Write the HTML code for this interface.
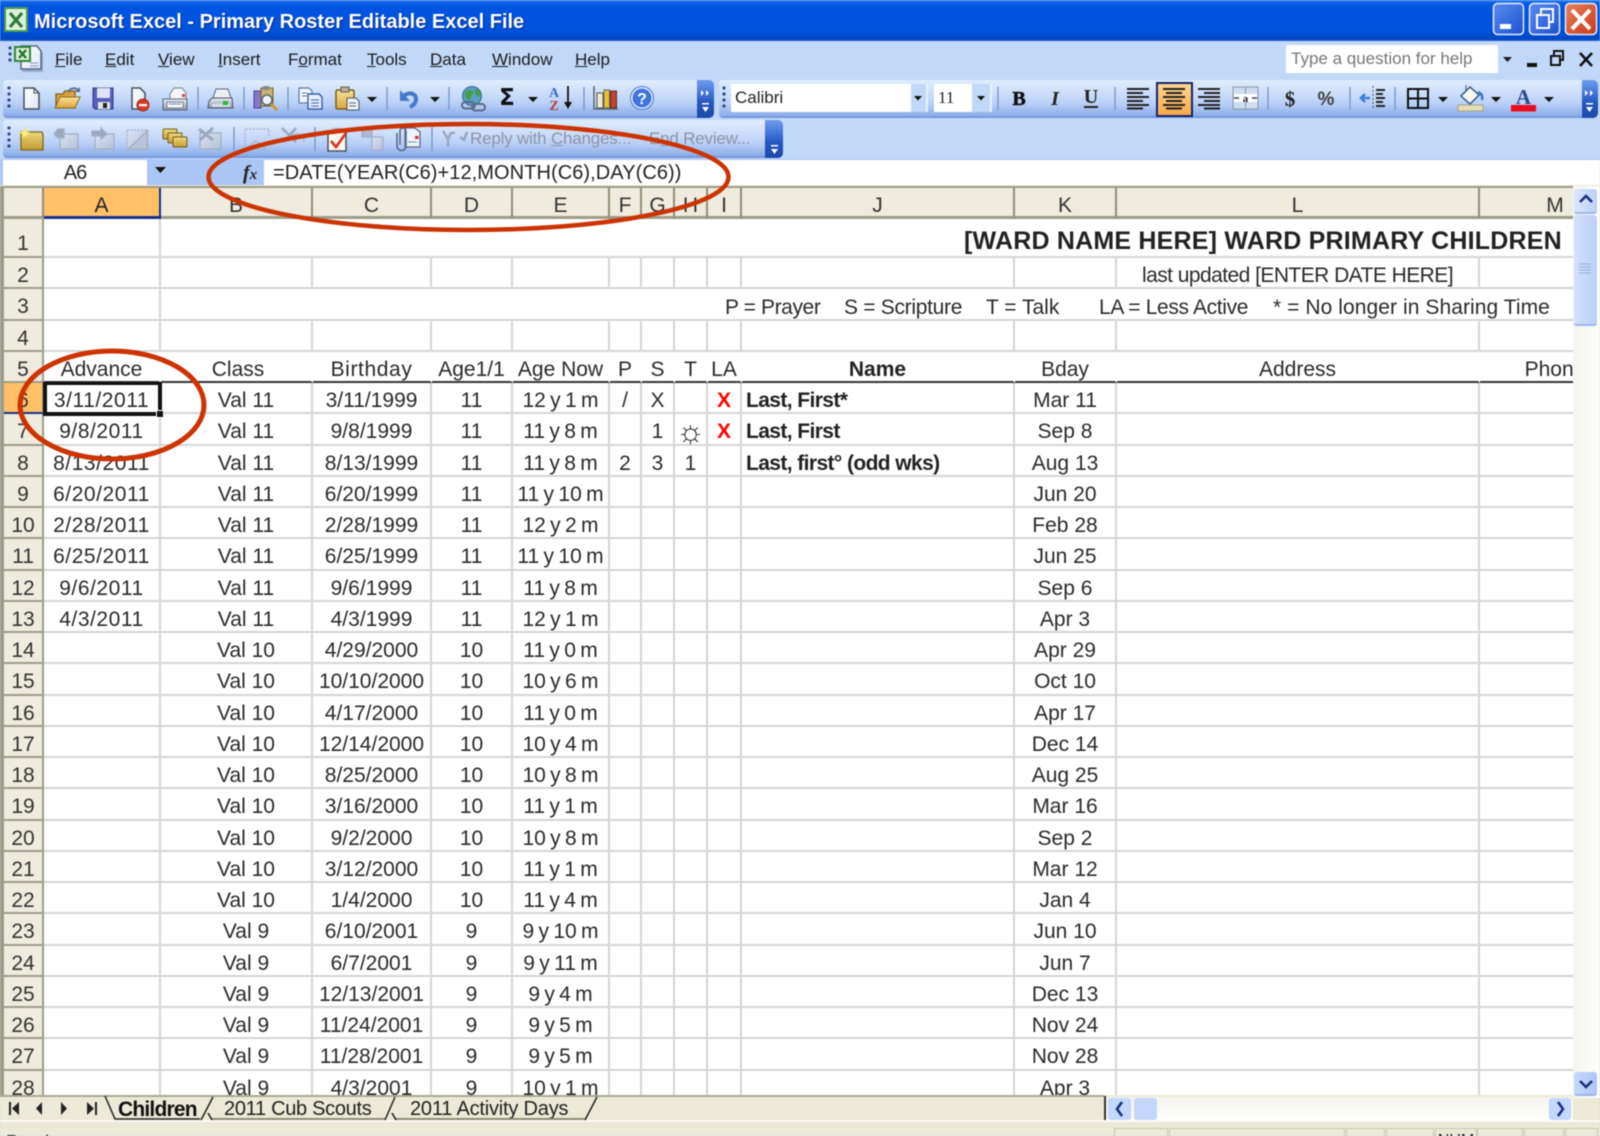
<!DOCTYPE html>
<html><head><meta charset="utf-8"><title>Microsoft Excel - Primary Roster</title>
<style>
html,body{margin:0;padding:0;background:#c1d8f9}
#p{position:relative;width:1600px;height:1136px;overflow:hidden;font-family:"Liberation Sans","DejaVu Sans",sans-serif;color:#222;filter:blur(.55px);background:#c1d8f9}
.a{position:absolute;white-space:nowrap}
#tb{left:0;top:0;width:1600px;height:41px;background:linear-gradient(#3a86f2 0,#0a5fe6 3px,#0054e0 8px,#0053dc 30px,#0046c4 39px,#2d62c8 41px)}
.tbar{height:38px;border-radius:4px 6px 6px 4px;background:linear-gradient(#e0ecfe 0,#cfe0fb 30%,#b9d0f7 62%,#8fb0ea 92%,#6a8fd8 100%)}
.chev{position:absolute;top:0;bottom:0;right:0;background:linear-gradient(#6f9df0,#2456c0 60%,#1d48a8);border-radius:0 5px 5px 0}
#g{position:absolute;left:4px;top:219px;width:1569px;height:876px;overflow:hidden;background:#fff}
.r{display:grid;grid-template-columns:40px 117px 152px 119px 81px 97px 32px 33px 33px 34px 273px 102px 363px 152px;grid-template-rows:100%;height:31.25px;font-size:21px;line-height:35px;text-align:center;color:#2a2a2a}
.r span{display:block;box-sizing:border-box;height:100%;border-right:2px solid #d4d4d4;border-bottom:2px solid #d4d4d4;overflow:visible;white-space:nowrap;min-width:0}
.r span:first-child{background:#efebde;border-right:2px solid #9d9c88;border-bottom:2px solid #9d9c88;color:#333}
.r span:nth-child(2){letter-spacing:.55px}
.r span:nth-child(3){padding-left:20px}
.r span:nth-child(6){word-spacing:-1.5px}
.r span:nth-child(11){text-align:left;padding-left:4px;font-weight:bold;color:#222;letter-spacing:-.6px}
.h{height:31.25px}
.h span{border-right-color:transparent;border-bottom:2px solid #333}
.h span:nth-child(2){letter-spacing:0}
.h span:nth-child(3){padding-left:4px}
.h span:nth-child(4){letter-spacing:.6px}
.h span:nth-child(6){word-spacing:0}
.h span:nth-child(11){text-align:center;padding:0;letter-spacing:0}
.r span.x{color:#f00;font-weight:bold}
.r span.s{font-size:32px}
#ch{position:absolute;left:4px;top:188px;width:1569px;height:31px;overflow:hidden;background:#efebde}
#ch div{position:absolute;top:0;height:28px;line-height:35px;font-size:21px;text-align:center;background:#efebde;border-right:2px solid #8f8e78;border-bottom:3px solid #9d9c88;color:#333}
</style></head><body><div id="p">

<div id="tb" class="a"></div>
<div class="a" style="left:34px;top:9px;font-size:20px;line-height:26px;font-weight:bold;color:#fff;text-shadow:1px 1px 1px #0a2a80">Microsoft Excel - Primary Roster Editable Excel File</div>

<!-- menu -->
<div class="a" style="left:0;top:47px;font-size:17px;line-height:26px;color:#1c1c1c">
<span class="a" style="left:55px"><u>F</u>ile</span><span class="a" style="left:105px"><u>E</u>dit</span><span class="a" style="left:158px"><u>V</u>iew</span><span class="a" style="left:218px"><u>I</u>nsert</span><span class="a" style="left:288px">F<u>o</u>rmat</span><span class="a" style="left:367px"><u>T</u>ools</span><span class="a" style="left:430px"><u>D</u>ata</span><span class="a" style="left:492px"><u>W</u>indow</span><span class="a" style="left:575px"><u>H</u>elp</span></div>
<div class="a" style="left:1286px;top:45px;width:231px;height:28px;background:#fff;font-size:17px;line-height:27px;color:#777;text-indent:5px;overflow:hidden">Type a question for help<div class="a" style="left:212px;top:0;width:19px;height:28px;background:#c3d8f8"></div></div>

<!-- toolbars -->
<div class="a tbar" style="left:3px;top:80px;width:711px"><div class="chev" style="width:17px"></div></div>
<div class="a tbar" style="left:719px;top:80px;width:879px"><div class="chev" style="width:16px"></div></div>
<div class="a tbar" style="left:3px;top:120px;width:780px"><div class="chev" style="width:18px"></div></div>

<div class="a" style="left:731px;top:84px;width:180px;height:28px;background:#fff;font-size:17px;line-height:27px;text-indent:4px">Calibri</div>
<div class="a" style="left:911px;top:84px;width:15px;height:28px;background:#c3d8f8;border-right:2px solid #e8f0fd"></div>
<div class="a" style="left:934px;top:84px;width:38px;height:28px;background:#fff;font:17px/27px 'Liberation Serif',serif;text-indent:4px">11</div>
<div class="a" style="left:972px;top:84px;width:18px;height:28px;background:#c3d8f8;border-right:2px solid #e8f0fd"></div>
<div class="a" style="left:1156px;top:82px;width:33px;height:31px;background:linear-gradient(#ffd58f,#fba94c);border:2px solid #10246e"></div>

<!-- toolbar 3 text -->
<div class="a" style="left:470px;top:126px;font-size:17px;line-height:26px;color:#8d94a6;letter-spacing:-.2px">Reply with <u>C</u>hanges...</div>
<div class="a" style="left:649px;top:126px;font-size:17px;line-height:26px;color:#8d94a6;letter-spacing:-.2px">E<u>n</u>d Review...</div>

<!-- formula bar -->
<div class="a" style="left:0;top:159px;width:1600px;height:27px;background:#aac6f4"></div>
<div class="a" style="left:3px;top:160px;width:144px;height:25px;background:#fff;text-align:center;font-size:20px;line-height:26px;letter-spacing:-1px;color:#222">A6</div>
<div class="a" style="left:264px;top:160px;width:1336px;height:25px;background:#fff;font-size:20px;line-height:26px;text-indent:9px;letter-spacing:.07px;color:#222">=DATE(YEAR(C6)+12,MONTH(C6),DAY(C6))</div>
<div class="a" style="left:243px;top:160px;font:italic bold 20px/26px 'Liberation Serif',serif;color:#222">f<span style="font-size:15px">x</span></div>

<!-- sheet area -->
<div class="a" style="left:0;top:185px;width:1600px;height:951px;background:#ece9d8"></div>
<div class="a" style="left:0;top:186px;width:1574px;height:2px;background:#9d9c88"></div>
<div class="a" style="left:0;top:186px;width:4px;height:930px;background:#9d9c88"></div>
<div id="ch">
<div style="left:0;width:38px"></div>
<div style="left:40px;width:115px;background:#ffc068;border-right:2px solid #1c2f8a;border-bottom:3px solid #1c2f8a;color:#222">A</div>
<div style="left:157px;width:150px">B</div>
<div style="left:309px;width:117px">C</div>
<div style="left:428px;width:79px">D</div>
<div style="left:509px;width:95px">E</div>
<div style="left:606px;width:30px">F</div>
<div style="left:638px;width:31px">G</div>
<div style="left:671px;width:31px">H</div>
<div style="left:704px;width:32px">I</div>
<div style="left:738px;width:271px">J</div>
<div style="left:1011px;width:100px">K</div>
<div style="left:1113px;width:361px">L</div>
<div style="left:1476px;width:150px;border-right:0">M</div>
</div>

<div id="g">
<div class="r" style="height:39px"><span>&nbsp;</span><span></span><span style="grid-column:3/15;border-right:0"></span></div>
<div class="r"><span>2</span><span></span><span></span><span></span><span></span><span></span><span></span><span></span><span></span><span></span><span></span><span></span><span style="letter-spacing:-.55px;font-weight:normal">last updated [ENTER DATE HERE]</span><span></span></div>
<div class="r"><span>3</span><span></span><span style="grid-column:3/15;border-right:0"></span></div>
<div class="r"><span>4</span><span></span><span></span><span></span><span></span><span></span><span></span><span></span><span></span><span></span><span></span><span></span><span></span><span></span></div>
<div class="r h"><span>5</span><span>Advance</span><span>Class</span><span>Birthday</span><span>Age1/1</span><span>Age Now</span><span>P</span><span>S</span><span>T</span><span>LA</span><span>Name</span><span>Bday</span><span>Address</span><span>Phone</span></div>
<div class="r"><span style="background:#ffc068;border-bottom-color:#1c2f8a">6</span><span>3/11/2011</span><span>Val 11</span><span>3/11/1999</span><span>11</span><span>12 y 1 m</span><span>/</span><span>X</span><span></span><span class="x">X</span><span>Last, First*</span><span>Mar 11</span><span></span><span></span></div>
<div class="r"><span>7</span><span>9/8/2011</span><span>Val 11</span><span>9/8/1999</span><span>11</span><span>11 y 8 m</span><span></span><span>1</span><span class="s">☼</span><span class="x">X</span><span>Last, First</span><span>Sep 8</span><span></span><span></span></div>
<div class="r"><span>8</span><span>8/13/2011</span><span>Val 11</span><span>8/13/1999</span><span>11</span><span>11 y 8 m</span><span>2</span><span>3</span><span>1</span><span></span><span>Last, first° (odd wks)</span><span>Aug 13</span><span></span><span></span></div>
<div class="r"><span>9</span><span>6/20/2011</span><span>Val 11</span><span>6/20/1999</span><span>11</span><span>11 y 10 m</span><span></span><span></span><span></span><span></span><span></span><span>Jun 20</span><span></span><span></span></div>
<div class="r"><span>10</span><span>2/28/2011</span><span>Val 11</span><span>2/28/1999</span><span>11</span><span>12 y 2 m</span><span></span><span></span><span></span><span></span><span></span><span>Feb 28</span><span></span><span></span></div>
<div class="r"><span>11</span><span>6/25/2011</span><span>Val 11</span><span>6/25/1999</span><span>11</span><span>11 y 10 m</span><span></span><span></span><span></span><span></span><span></span><span>Jun 25</span><span></span><span></span></div>
<div class="r"><span>12</span><span>9/6/2011</span><span>Val 11</span><span>9/6/1999</span><span>11</span><span>11 y 8 m</span><span></span><span></span><span></span><span></span><span></span><span>Sep 6</span><span></span><span></span></div>
<div class="r"><span>13</span><span>4/3/2011</span><span>Val 11</span><span>4/3/1999</span><span>11</span><span>12 y 1 m</span><span></span><span></span><span></span><span></span><span></span><span>Apr 3</span><span></span><span></span></div>
<div class="r"><span>14</span><span></span><span>Val 10</span><span>4/29/2000</span><span>10</span><span>11 y 0 m</span><span></span><span></span><span></span><span></span><span></span><span>Apr 29</span><span></span><span></span></div>
<div class="r"><span>15</span><span></span><span>Val 10</span><span>10/10/2000</span><span>10</span><span>10 y 6 m</span><span></span><span></span><span></span><span></span><span></span><span>Oct 10</span><span></span><span></span></div>
<div class="r"><span>16</span><span></span><span>Val 10</span><span>4/17/2000</span><span>10</span><span>11 y 0 m</span><span></span><span></span><span></span><span></span><span></span><span>Apr 17</span><span></span><span></span></div>
<div class="r"><span>17</span><span></span><span>Val 10</span><span>12/14/2000</span><span>10</span><span>10 y 4 m</span><span></span><span></span><span></span><span></span><span></span><span>Dec 14</span><span></span><span></span></div>
<div class="r"><span>18</span><span></span><span>Val 10</span><span>8/25/2000</span><span>10</span><span>10 y 8 m</span><span></span><span></span><span></span><span></span><span></span><span>Aug 25</span><span></span><span></span></div>
<div class="r"><span>19</span><span></span><span>Val 10</span><span>3/16/2000</span><span>10</span><span>11 y 1 m</span><span></span><span></span><span></span><span></span><span></span><span>Mar 16</span><span></span><span></span></div>
<div class="r"><span>20</span><span></span><span>Val 10</span><span>9/2/2000</span><span>10</span><span>10 y 8 m</span><span></span><span></span><span></span><span></span><span></span><span>Sep 2</span><span></span><span></span></div>
<div class="r"><span>21</span><span></span><span>Val 10</span><span>3/12/2000</span><span>10</span><span>11 y 1 m</span><span></span><span></span><span></span><span></span><span></span><span>Mar 12</span><span></span><span></span></div>
<div class="r"><span>22</span><span></span><span>Val 10</span><span>1/4/2000</span><span>10</span><span>11 y 4 m</span><span></span><span></span><span></span><span></span><span></span><span>Jan 4</span><span></span><span></span></div>
<div class="r"><span>23</span><span></span><span>Val 9</span><span>6/10/2001</span><span>9</span><span>9 y 10 m</span><span></span><span></span><span></span><span></span><span></span><span>Jun 10</span><span></span><span></span></div>
<div class="r"><span>24</span><span></span><span>Val 9</span><span>6/7/2001</span><span>9</span><span>9 y 11 m</span><span></span><span></span><span></span><span></span><span></span><span>Jun 7</span><span></span><span></span></div>
<div class="r"><span>25</span><span></span><span>Val 9</span><span>12/13/2001</span><span>9</span><span>9 y 4 m</span><span></span><span></span><span></span><span></span><span></span><span>Dec 13</span><span></span><span></span></div>
<div class="r"><span>26</span><span></span><span>Val 9</span><span>11/24/2001</span><span>9</span><span>9 y 5 m</span><span></span><span></span><span></span><span></span><span></span><span>Nov 24</span><span></span><span></span></div>
<div class="r"><span>27</span><span></span><span>Val 9</span><span>11/28/2001</span><span>9</span><span>9 y 5 m</span><span></span><span></span><span></span><span></span><span></span><span>Nov 28</span><span></span><span></span></div>
<div class="r"><span>28</span><span></span><span>Val 9</span><span>4/3/2001</span><span>9</span><span>10 y 1 m</span><span></span><span></span><span></span><span></span><span></span><span>Apr 3</span><span></span><span></span></div>

<div class="a" style="left:0;top:8px;width:38px;text-align:center;font-size:21px;line-height:33px;color:#333">1</div>
<div class="a" style="left:960px;top:3px;font-size:25px;line-height:38px;font-weight:bold;color:#222;letter-spacing:.2px">[WARD NAME HERE] WARD PRIMARY CHILDREN</div>
<div class="a" style="left:0;top:72px;font-size:21px;line-height:33px;color:#2a2a2a">
<span class="a" style="left:721px;letter-spacing:-.4px">P = Prayer</span><span class="a" style="left:840px;letter-spacing:-.3px">S = Scripture</span><span class="a" style="left:982px">T = Talk</span><span class="a" style="left:1095px;letter-spacing:-.35px">LA = Less Active</span><span class="a" style="left:1269px;letter-spacing:.07px">* = No longer in Sharing Time</span></div>
<div class="a" style="left:39px;top:163px;width:111px;height:27px;border:4px solid #111;border-top-width:3px"></div>
<div class="a" style="left:152px;top:191px;width:6px;height:6px;background:#111;border:1px solid #fff"></div>
</div>

<!-- vertical scrollbar -->
<div class="a" style="left:1573px;top:186px;width:27px;height:912px;background:linear-gradient(90deg,#f5f4ee,#fdfdfa)"></div>
<div class="a" style="left:1574px;top:189px;width:23px;height:23px;background:linear-gradient(90deg,#dbe7fd,#bcd0f8);border-radius:3px;border-bottom:2px solid #9bb6e8"></div>
<div class="a" style="left:1574px;top:215px;width:23px;height:109px;background:linear-gradient(90deg,#d3e1fc,#bccff8);border-radius:3px;border-bottom:2px solid #9bb6e8"></div>
<div class="a" style="left:1574px;top:1072px;width:23px;height:22px;background:linear-gradient(90deg,#c6d8fb,#aec6f6);border-radius:3px;border-bottom:2px solid #9bb6e8"></div>

<!-- tab strip -->
<div class="a" style="left:0;top:1095px;width:1104px;height:25px;background:#ece9d8;border-top:2px solid #aaa892"></div>
<div class="a" style="left:1104px;top:1097px;width:469px;height:23px;background:linear-gradient(#f5f4ee,#fdfdfa)"></div>
<div class="a" style="left:1104px;top:1096px;width:2px;height:24px;background:#333"></div>
<div class="a" style="left:1108px;top:1098px;width:23px;height:22px;background:#c3d6fb;border-radius:3px"></div>
<div class="a" style="left:1134px;top:1098px;width:23px;height:22px;background:#c3d6fb;border-radius:3px"></div>
<div class="a" style="left:1549px;top:1098px;width:22px;height:22px;background:#c3d6fb;border-radius:3px"></div>
<div class="a" style="left:118px;top:1096px;font-size:21px;line-height:27px;font-weight:bold;color:#111;letter-spacing:-.8px">Children</div>
<div class="a" style="left:224px;top:1096px;font-size:20px;line-height:27px;color:#222;letter-spacing:-.3px">2011 Cub Scouts</div>
<div class="a" style="left:410px;top:1096px;font-size:20px;line-height:27px;color:#222;letter-spacing:-.2px">2011 Activity Days</div>

<!-- status -->
<div class="a" style="left:0;top:1120px;width:1600px;height:2px;background:#fbfaf5"></div>
<div class="a" style="left:6px;top:1131px;font-size:18px;line-height:22px;color:#222">Ready</div>
<div class="a" style="left:1114px;top:1128px;width:52px;height:10px;border:1px solid #c8c5b2"></div>
<div class="a" style="left:1169px;top:1128px;width:174px;height:10px;border:1px solid #c8c5b2"></div>
<div class="a" style="left:1346px;top:1128px;width:37px;height:10px;border:1px solid #c8c5b2"></div>
<div class="a" style="left:1386px;top:1128px;width:46px;height:10px;border:1px solid #c8c5b2"></div>
<div class="a" style="left:1435px;top:1128px;width:40px;height:10px;border:1px solid #c8c5b2;font-size:16px;line-height:24px;text-align:center;overflow:hidden;color:#111">NUM</div>
<div class="a" style="left:1477px;top:1128px;width:44px;height:10px;border:1px solid #c8c5b2"></div>
<div class="a" style="left:1524px;top:1128px;width:38px;height:10px;border:1px solid #c8c5b2"></div>
<div class="a" style="left:1565px;top:1128px;width:31px;height:10px;border:1px solid #c8c5b2"></div>

<svg class="a" style="left:0;top:0" width="1600" height="1136" viewBox="0 0 1600 1136" xmlns="http://www.w3.org/2000/svg" font-family="Liberation Sans, sans-serif">
<defs>
<linearGradient id="bb" x1="0" y1="0" x2="1" y2="1"><stop offset="0" stop-color="#5b8cf0"/><stop offset="1" stop-color="#1c4fd0"/></linearGradient>
<linearGradient id="rr" x1="0" y1="0" x2="1" y2="1"><stop offset="0" stop-color="#e8835c"/><stop offset="1" stop-color="#c9371a"/></linearGradient>
<linearGradient id="fo" x1="0" y1="0" x2="0" y2="1"><stop offset="0" stop-color="#fbe49a"/><stop offset="1" stop-color="#d9a43a"/></linearGradient>
<linearGradient id="fd" x1="0" y1="0" x2="0" y2="1"><stop offset="0" stop-color="#f0d882"/><stop offset="1" stop-color="#c09a30"/></linearGradient>
<linearGradient id="dc" x1="0" y1="0" x2="1" y2="1"><stop offset="0" stop-color="#fff"/><stop offset="1" stop-color="#dfe7f5"/></linearGradient>
<linearGradient id="gy" x1="0" y1="0" x2="0" y2="1"><stop offset="0" stop-color="#e8edf5"/><stop offset="1" stop-color="#8c95a6"/></linearGradient>
<linearGradient id="dg" x1="0" y1="0" x2="1" y2="1"><stop offset="0" stop-color="#dbe3f1"/><stop offset="1" stop-color="#b3c0d8"/></linearGradient>
</defs>
<!-- title icon -->
<rect x="5" y="8" width="22" height="23" fill="#dff0da" stroke="#4a9a50" stroke-width="2"/><path d="M10 13l12 14M22 13L10 27" stroke="#2d7d3a" stroke-width="3.200"/>
<!-- window buttons -->
<g stroke="#e6eefc" stroke-width="1.500"><rect x="1493.500" y="3.500" width="30" height="31" rx="4" fill="url(#bb)"/><rect x="1529.500" y="3.500" width="30" height="31" rx="4" fill="url(#bb)"/><rect x="1565.500" y="3.500" width="31" height="31" rx="4" fill="url(#rr)"/></g>
<rect x="1500" y="24" width="11" height="5" fill="#fff"/>
<g fill="none" stroke="#fff" stroke-width="2"><rect x="1537" y="15" width="12" height="13"/><path d="M1541 14v-5h12v13h-4"/><path d="M1572 10l18 19M1590 10l-18 19" stroke-width="4"/></g>
<!-- menu icon -->
<g fill="#2c4a84"><circle cx="10" cy="48" r="1.600"/><circle cx="10" cy="54" r="1.600"/><circle cx="10" cy="60" r="1.600"/></g>
<path d="M21 46h16l5 5v19H21z" fill="#4a5e82" opacity=".35" transform="translate(1 2)"/><path d="M21 46h16l4 5v18H21z" fill="url(#dc)" stroke="#55688c" stroke-width="1.500"/><rect x="15" y="47" width="15" height="14" fill="#dceed6" stroke="#2f8a3b" stroke-width="2"/><path d="M19 50l7 8M26 50l-7 8" stroke="#1f7a32" stroke-width="2.400"/><path d="M30 63h8M30 66h8" stroke="#7f96c0"/>
<!-- help box arrow & doc controls -->
<path d="M1503 57h9l-4.500 5z" fill="#1a1a2a"/><rect x="1527" y="63" width="10" height="4" fill="#111"/>
<g fill="none" stroke="#111" stroke-width="2"><rect x="1551" y="56" width="9" height="9"/><path d="M1554 55v-4h9v9h-3"/><path d="M1580 53l12 13M1592 53l-12 13" stroke-width="2.500"/></g>

<!-- grips -->
<g fill="#2c4a84"><circle cx="9" cy="88" r="1.600"/><circle cx="9" cy="94" r="1.600"/><circle cx="9" cy="100" r="1.600"/><circle cx="9" cy="106" r="1.600"/><circle cx="724" cy="88" r="1.600"/><circle cx="724" cy="94" r="1.600"/><circle cx="724" cy="100" r="1.600"/><circle cx="724" cy="106" r="1.600"/><circle cx="9" cy="128" r="1.600"/><circle cx="9" cy="134" r="1.600"/><circle cx="9" cy="140" r="1.600"/><circle cx="9" cy="146" r="1.600"/></g>
<!-- separators -->
<g stroke="#7f9cce" stroke-width="1.500"><path d="M198 87v23M244 87v23M288 87v23M387 87v23M449 87v23M584 87v23M998 87v23M1115 87v23M1268 87v23M1350 87v23M1395 87v23M234 127v24M315 127v24M432 127v24"/></g>
<!-- chevrons -->
<g fill="#fff"><path d="M701 90l3 3-3 3zM706 90l3 3-3 3zM702 107h7l-3.500 5zM702 103h7v1.500h-7z"/><path d="M1585 90l3 3-3 3zM1590 90l3 3-3 3zM1586 107h7l-3.500 5zM1586 103h7v1.500h-7z"/><path d="M771 149h7l-3.500 5zM771 145h7v1.500h-7z"/></g>

<!-- new doc -->
<path d="M24 88h10l5 5v16H24z" fill="url(#dc)" stroke="#46505f" stroke-width="1.500"/><path d="M34 88v5h5" fill="none" stroke="#46505f"/>
<!-- open -->
<path d="M56 108V94h7l2-3h10v17z" fill="#d9a43a" stroke="#7e6020" stroke-width="1.200"/><path d="M55 108l5-11h20l-5 11z" fill="url(#fo)" stroke="#8a6a20"/><path d="M68 92c2-4 7-5 10-2" fill="none" stroke="#4c6f9c" stroke-width="1.800"/><path d="M80 87v5h-5z" fill="#4c6f9c"/>
<!-- save -->
<path d="M93 88h20v21H95l-2-2z" fill="#5a5fb8" stroke="#2e3a86"/><rect x="97" y="88" width="13" height="10" fill="#dfe4f6"/><rect x="98" y="102" width="12" height="7" fill="#e4e4e4"/><rect x="103" y="103" width="4" height="5" fill="#222"/>
<!-- permission -->
<path d="M132 88h8l5 5v16h-13z" fill="url(#dc)" stroke="#454f60" stroke-width="1.500"/><circle cx="143" cy="105" r="6" fill="#d83a2a" stroke="#a82818"/><rect x="139" y="104" width="8" height="2.200" fill="#fff"/>
<!-- mail -->
<path d="M170 94l4-6h8l4 5v8h-16z" fill="#f4f6fa" stroke="#747e90"/><rect x="182" y="94" width="3" height="3" fill="#d44"/><rect x="163" y="99" width="24" height="11" fill="url(#gy)" stroke="#5c6678"/><rect x="167" y="102" width="16" height="6" fill="#f2f5fa" stroke="#7a8498"/><path d="M169 104h12" stroke="#7a8ab0"/>
<!-- print -->
<path d="M216 89h12l3 9h-18z" fill="#edf0f6" stroke="#5c6678"/><path d="M212 98h20l1 10h-25l1-7z" fill="url(#gy)" stroke="#4c5464"/><rect x="212" y="104" width="18" height="3" fill="#d8dde6"/><rect x="223" y="101" width="5" height="4" fill="#22c032"/>
<!-- research -->
<rect x="254" y="91" width="7" height="17" fill="#8278c8" stroke="#4a4490"/><rect x="261" y="88" width="12" height="18" fill="#c8b470" stroke="#6e6030"/><rect x="263" y="86" width="6" height="4" fill="#888"/><circle cx="267" cy="100" r="5" fill="#eef2fa" stroke="#5a6478" stroke-width="1.500"/><path d="M271 104l6 6" stroke="#d09a1c" stroke-width="3"/>
<!-- copy -->
<path d="M299 88h10l3 3v12h-13z" fill="#f2f5fb" stroke="#5a78b0" stroke-width="1.200"/><path d="M308 94h11l3 3v12h-14z" fill="#e8effb" stroke="#3560a8" stroke-width="1.400"/><path d="M311 100h8M311 103h8M311 106h8" stroke="#3a66b8"/><path d="M302 93h5M302 96h5" stroke="#5a78b0"/>
<!-- paste -->
<rect x="336" y="90" width="18" height="19" rx="1.500" fill="url(#fo)" stroke="#76601e" stroke-width="1.500"/><rect x="341" y="87" width="8" height="5" fill="#b8b0a0" stroke="#665c40"/><path d="M347 98h9l3 3v9h-12z" fill="#eff2f7" stroke="#4a5568"/><path d="M349 103h7M349 106h7" stroke="#667"/>
<path d="M367 97h10l-5 5zM430 97h10l-5 5zM528 97h10l-5 5zM1438 97h10l-5 5zM1491 97h10l-5 5zM1544 97h10l-5 5zM914 96h8l-4 4.500zM977 96h8l-4 4.500zM155 167h11l-5.500 6z" fill="#111"/>
<!-- undo -->
<path d="M400 90v11h10z" fill="#4678cc"/><path d="M403 97c5-6 13-4 13 2 0 3-2 6-6 8" fill="none" stroke="#4678cc" stroke-width="4"/>
<!-- globe -->
<circle cx="472" cy="96" r="9.500" fill="#5a9ec8" stroke="#3a6a90"/><path d="M465 92c3-3 7-3 8 0s-2 4-3 7-3 1-5-3zM475 89c3 0 6 3 6 6l-3 2c-2-2-4-4-3-8z" fill="#44a048"/><rect x="462" y="102" width="13" height="6.500" rx="3.200" fill="none" stroke="#5c6c84" stroke-width="2"/><rect x="472" y="104" width="13" height="6.500" rx="3.200" fill="none" stroke="#5c6c84" stroke-width="2"/>
<text x="507" y="105" text-anchor="middle" font-size="23" font-weight="bold" font-family="DejaVu Sans, sans-serif" fill="#111">Σ</text>
<!-- sort -->
<text x="554" y="97" text-anchor="middle" font-size="14" font-weight="bold" font-family="Liberation Serif, serif" fill="#3a68c4">A</text><text x="554" y="110" text-anchor="middle" font-size="14" font-weight="bold" font-family="Liberation Serif, serif" fill="#b04040">Z</text>
<path d="M568 86v21" stroke="#111" stroke-width="1.800"/><path d="M564 102h8l-4 7z" fill="#111"/>
<!-- chart -->
<path d="M594 86v23h24" fill="none" stroke="#5c6678" stroke-width="1.500"/><rect x="597" y="93" width="6" height="15" fill="#f0e8d0" stroke="#555"/><rect x="604" y="90" width="5.500" height="18" fill="#e8c030" stroke="#665"/><rect x="610.500" y="91" width="6" height="17" fill="#c84030" stroke="#533"/>
<!-- help -->
<circle cx="642" cy="98" r="10.500" fill="#3f74dc" stroke="#dfe9fb" stroke-width="2.200"/><circle cx="642" cy="98" r="11.500" fill="none" stroke="#4a78c8"/><text x="642" y="104" text-anchor="middle" font-size="16" font-weight="bold" fill="#fff">?</text>

<!-- format toolbar -->
<text x="1019" y="105" text-anchor="middle" font-size="20" font-weight="bold" font-family="Liberation Serif, serif" fill="#111" stroke="#111" stroke-width=".5">B</text>
<text x="1055" y="105" text-anchor="middle" font-size="20" font-weight="bold" font-style="italic" font-family="Liberation Serif, serif" fill="#222">I</text>
<text x="1091" y="103" text-anchor="middle" font-size="20" font-weight="bold" font-family="Liberation Serif, serif" fill="#222">U</text><rect x="1084" y="106" width="14" height="2" fill="#222"/>
<g stroke="#222" stroke-width="2"><path d="M1127 89h22M1127 93h16M1127 97h22M1127 101h16M1127 105h22M1127 108.500h16"/><path d="M1163 89h22M1166 93h16M1163 97h22M1166 101h16M1163 105h22M1166 108.500h16"/><path d="M1198 89h22M1204 93h16M1198 97h22M1204 101h16M1198 105h22M1204 108.500h16"/></g>
<rect x="1233" y="87" width="25" height="22" fill="#cfdcf0" stroke="#8a96aa"/><rect x="1234" y="94" width="23" height="8" fill="#fff"/><text x="1245.500" y="102" text-anchor="middle" font-size="11" font-weight="bold" font-family="Liberation Serif, serif" fill="#222">a</text><path d="M1234 98h5M1252 98h5" stroke="#445" stroke-width="1.500"/><path d="M1245.500 87v7M1245.500 102v7" stroke="#8a96aa"/>
<text x="1290" y="106" text-anchor="middle" font-size="21" font-weight="bold" font-family="Liberation Serif, serif" fill="#222">$</text>
<text x="1326" y="105" text-anchor="middle" font-size="19" font-weight="bold" fill="#444">%</text>
<path d="M1373 86v24" stroke="#555" stroke-dasharray="2 2"/><path d="M1376 90h9M1376 94h7M1376 98h9M1376 102h7M1376 106h9" stroke="#222" stroke-width="2"/><path d="M1360 98h10M1365 94l-4 4 4 4" fill="none" stroke="#3a7fe0" stroke-width="2.500"/>
<g fill="none" stroke="#111" stroke-width="2"><rect x="1408" y="89" width="20" height="19"/><path d="M1418 89v19M1408 98.500h20"/></g>
<path d="M1470 87l-9 9 9 8 9-9z" fill="#f8f8f4" stroke="#2a5a8c" stroke-width="1.500"/><path d="M1478 92c3 1 5 4 4 8" stroke="#3a78d0" stroke-width="2.500" fill="none"/><path d="M1466 85v6" stroke="#555"/><rect x="1458" y="105" width="25" height="6" fill="#e5dfb8" stroke="#a8a27a"/>
<text x="1523.500" y="104" text-anchor="middle" font-size="21" font-weight="bold" font-family="Liberation Serif, serif" fill="#2a4a90">A</text><rect x="1511" y="105" width="25" height="6.500" fill="#ee0b1c"/>

<!-- toolbar 3 icons -->
<path d="M21 132h21l1 3v15H21z" fill="url(#fd)" stroke="#806820" stroke-width="1.300"/><path d="M25 128l1.500 3.500 3.500 1-3 2 .5 3.500-2.500-2.500-3 2.500.5-3.500-3-2 3.500-1z" fill="#fff07a" stroke="#f0d040" stroke-width=".5"/>
<g stroke="#a4b0c8" fill="url(#dg)" stroke-width="1.300">
<path d="M60 134h18v15H60z"/><path d="M64 129v9h-6l-4-4 4-5z" fill="#9aa8c0"/>
<path d="M95 134h19v15H95z"/><path d="M92 131h9v-3l6 6-6 5v-3h-9z" fill="#9aa8c0"/>
<path d="M127 130h21v19h-21z" stroke-dasharray="2 1.500"/><path d="M128 149l19-18v18z" fill="#b8c4da"/>
<path d="M200 133h21v16h-21z"/><path d="M199 129l14 11M213 128l-13 12" stroke="#9aa8c0" stroke-width="3" fill="none"/>
<path d="M245 149v-20h24v8" fill="none" stroke-dasharray="2 1.500"/><path d="M246 149l10-8 10 8z" fill="#c8d2e4"/>
<path d="M282 128l14 14M296 128l-12 14" fill="none" stroke="#9aa8c0" stroke-width="2.500"/><path d="M290 140a7 7 0 1 1 14 2" fill="none"/>
<path d="M362 129h10v8h-10z" fill="#aeb9ce"/><path d="M372 137h11v13h-11z"/>
</g>
<g fill="url(#fd)" stroke="#76601e" stroke-width="1"><rect x="163" y="129" width="14" height="10" rx="1"/><rect x="168" y="133" width="14" height="10" rx="1"/><rect x="173" y="137" width="14" height="10" rx="1"/></g>
<rect x="328" y="131" width="18" height="20" fill="#fbf8f0" stroke="#4a5264" stroke-width="1.500"/><path d="M331 141l5 6 10-14" fill="none" stroke="#d83020" stroke-width="2.600"/><rect x="332" y="128" width="10" height="4" fill="#aab4c8"/>
<path d="M405 128h10l5 4v15h-15z" fill="#eef2fa" stroke="#5c6a8a" stroke-width="1.300"/><path d="M397 133v13a4.500 4.500 0 0 0 9 0v-15a3 3 0 0 0-6 0v14" fill="none" stroke="#55658a" stroke-width="1.500"/><rect x="415" y="136" width="3.500" height="3" fill="#e23030"/><path d="M408 142h9" stroke="#7a8ab0"/>
<g fill="none" stroke="#9aa8c0" stroke-width="2.500"><path d="M443 131l5 8 3-6 4 0M448 139v8"/><path d="M467 132l-3 8-4-3"/></g>

<!-- scroll arrows -->
<path d="M1580 202l6-6 6 6M1580 1081l6 6 6-6" fill="none" stroke="#15307a" stroke-width="2.500"/>
<g stroke="#97aee0" stroke-width="1"><path d="M1579 264h12M1579 267h12M1579 270h12M1579 273h12"/></g>
<path d="M1122 1102l-5 7 5 7M1558 1102l5 7-5 7" fill="none" stroke="#15307a" stroke-width="2.500"/>

<!-- sheet nav -->
<path d="M10 1102v13" stroke="#222" stroke-width="2"/><path d="M19 1102l-7 6.500 7 6.500zM42 1102l-6 6.500 6 6.500zM61 1102l6 6.500-6 6.500zM87 1102l7 6.500-7 6.500z" fill="#222"/><path d="M96 1102v13" stroke="#222" stroke-width="2"/>
<!-- tabs -->
<path d="M105 1096l10 23h85" fill="none" stroke="#222" stroke-width="1.500"/>
<path d="M212 1119H385M395 1119H585" fill="none" stroke="#8e8c76" stroke-width="2"/>
<path d="M201 1120l12-23M208 1113l4 7M385 1120l10-23M392 1113l4 7M585 1120l12-23" fill="none" stroke="#222" stroke-width="1.500"/>

<!-- red ellipses -->
<ellipse cx="468.500" cy="177" rx="260" ry="53" fill="none" stroke="#cc3300" stroke-width="4.500"/>
<ellipse cx="112" cy="405" rx="92" ry="54" fill="none" stroke="#cc3300" stroke-width="5"/>
</svg>
</div></body></html>
